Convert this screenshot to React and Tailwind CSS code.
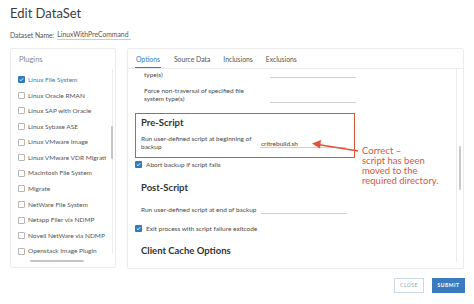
import React from 'react';

const plugins = [
    { name: 'Linux File System', checked: true },
    { name: 'Linux Oracle RMAN' },
    { name: 'Linux SAP with Oracle' },
    { name: 'Linux Sybase ASE' },
    { name: 'Linux VMware Image' },
    { name: 'Linux VMware VDR Migrati' },
    { name: 'Macintosh File System' },
    { name: 'Migrate' },
    { name: 'NetWare File System' },
    { name: 'Netapp Filer via NDMP' },
    { name: 'Novell NetWare via NDMP' },
    { name: 'Openstack Image Plugin' },
];

const Box = ({ checked }) => (
    checked ? (
        <span className="w-[7px] h-[7px] shrink-0 rounded-[1px] bg-[#2f7dbd] flex items-center justify-center">
            <svg width="5" height="5" viewBox="0 0 10 10"><path d="M1.5 5.2 L4 7.5 L8.5 2.5" stroke="white" strokeWidth="1.8" fill="none" /></svg>
        </span>
    ) : (
        <span className="w-[7px] h-[7px] shrink-0 rounded-[1px] border border-[#b5b5b5] bg-white" />
    )
);

const Field = ({ value }) => (
    <div className="w-[86px] h-[9px] shrink-0 border-b border-[#cfcfcf] text-[6.5px] leading-[9px] text-[#444] pl-[1px]">{value}</div>
);

const App = () => {
    return (
        <div className="w-[474px] h-[304px] bg-white relative overflow-hidden text-[#4a4a4a]" style={{ fontFamily: 'Lato, "Liberation Sans", sans-serif' }}>
            <div className="pl-[10px] pt-[3px] text-[13px] leading-[20px] text-[#3d3d3d]">Edit DataSet</div>
            <div className="pl-[10px] mt-[7px] flex items-center text-[6.8px] leading-[9px] text-[#555]">
                <span>Dataset Name:</span>
                <span className="ml-[3px] border-b border-[#ccc] pr-[3px]">LinuxWithPreCommand</span>
            </div>

            <div className="flex mt-[8px] pl-[10px] gap-[11px]">
                {/* plugins */}
                <div className="w-[106px] h-[220px] border border-[#ececec] rounded-[2px] flex flex-col">
                    <div className="pl-[8px] pt-[5px] h-[20px] text-[7.5px] text-[#8a8a8a]">Plugins</div>
                    <div className="flex flex-1">
                        <div className="flex-1 flex flex-col pl-[7px] pt-[3px] overflow-hidden">
                            {plugins.map((p) => (
                                <div key={p.name} className="h-[15.6px] flex items-center gap-[3px] whitespace-nowrap">
                                    <Box checked={p.checked} />
                                    <span className={`text-[6.5px] ${p.checked ? 'text-[#2f7dbd]' : 'text-[#555]'}`}>{p.name}</span>
                                </div>
                            ))}
                            <div className="mt-[1px] ml-[12px] w-[54px] h-[2px] rounded bg-[#c4c4c4]" />
                        </div>
                        <div className="w-[6px] mb-[14px] flex justify-center relative">
                            <div className="w-[1px] h-full bg-[#ececec]" />
                            <div className="absolute top-[57px] w-[2px] h-[33px] rounded bg-[#c4c4c4]" />
                        </div>
                    </div>
                </div>

                {/* options panel */}
                <div className="w-[337px] h-[221px] border border-[#ececec] rounded-[2px] flex flex-col">
                    <div className="h-[20px] flex items-end pl-[7px] gap-[13px] text-[6.8px] text-[#555] border-b border-[#ebebeb]">
                        <div className="pb-[3px] border-b-[1.5px] border-[#2f7dbd] text-[#2f7dbd] px-[1px]">Options</div>
                        <div className="pb-[4px]">Source Data</div>
                        <div className="pb-[4px]">Inclusions</div>
                        <div className="pb-[4px]">Exclusions</div>
                    </div>
                    <div className="flex flex-1">
                        <div className="w-[329px] h-[193px] border-r border-[#ececec] overflow-hidden pl-[7px] text-[6.5px] leading-[8px]">
                            <div className="flex items-start justify-between w-[212px] ml-[9px] mt-[2px]">
                                <span>type(s)</span>
                                <div className="mt-[-2px]"><Field value="" /></div>
                            </div>
                            <div className="flex items-end justify-between w-[212px] ml-[9px] mt-[8px]">
                                <span>Force non-traversal of specified file<br />system type(s)</span>
                                <Field value="" />
                            </div>
                            <div className="mt-[10px] w-[220px] h-[45px] border-[1.5px] border-[#e0533a] pl-[5px] pt-[3px]">
                                <div className="text-[9.5px] leading-[12px] font-bold text-[#333]">Pre-Script</div>
                                <div className="flex items-center justify-between w-[205px] mt-[6px]">
                                    <span>Run user-defined script at beginning of<br />backup</span>
                                    <Field value="critrebuild.sh" />
                                </div>
                            </div>
                            <div className="flex items-center gap-[4px] mt-[2px] h-[9px]">
                                <Box checked />
                                <span>Abort backup if script fails</span>
                            </div>
                            <div className="ml-[6px] mt-[13px] text-[9.5px] leading-[12px] font-bold text-[#333]">Post-Script</div>
                            <div className="flex items-center justify-between w-[206px] ml-[6px] mt-[11px]">
                                <span className="whitespace-nowrap">Run user-defined script at end of backup</span>
                                <Field value="" />
                            </div>
                            <div className="flex items-center gap-[4px] mt-[10px] h-[9px]">
                                <Box checked />
                                <span>Exit process with script failure exitcode</span>
                            </div>
                            <div className="ml-[6px] mt-[12px] text-[9.5px] leading-[12px] font-bold text-[#333]">Client Cache Options</div>
                        </div>
                        <div className="w-[6px] flex justify-center relative">
                            <div className="absolute top-[77px] w-[2px] h-[44px] rounded bg-[#c8c8c8]" />
                        </div>
                    </div>
                </div>
            </div>

            <div className="flex justify-end gap-[8px] pr-[9px] mt-[9px]">
                <button className="w-[30px] h-[15px] border border-[#c9d9e6] text-[5px] tracking-[0.5px] text-[#8aa] bg-white">CLOSE</button>
                <button className="w-[33px] h-[15px] bg-[#3a7bbf] text-[5px] font-bold tracking-[0.5px] text-white">SUBMIT</button>
            </div>

            {/* annotation */}
            <svg className="absolute left-[308px] top-[138px]" width="56" height="20" viewBox="0 0 56 20">
                <line x1="10" y1="6.5" x2="50" y2="13" stroke="#e0533a" strokeWidth="1.6" />
                <polygon points="4,5.5 13,2 12,10.5" fill="#e0533a" />
            </svg>
            <div className="absolute left-[362px] top-[146px] text-[9.5px] leading-[10px] text-[#e0533a] whitespace-nowrap">
                <div>Correct –</div>
                <div>script has been</div>
                <div>moved to the</div>
                <div>required directory.</div>
            </div>
        </div>
    );
};

export default App;
